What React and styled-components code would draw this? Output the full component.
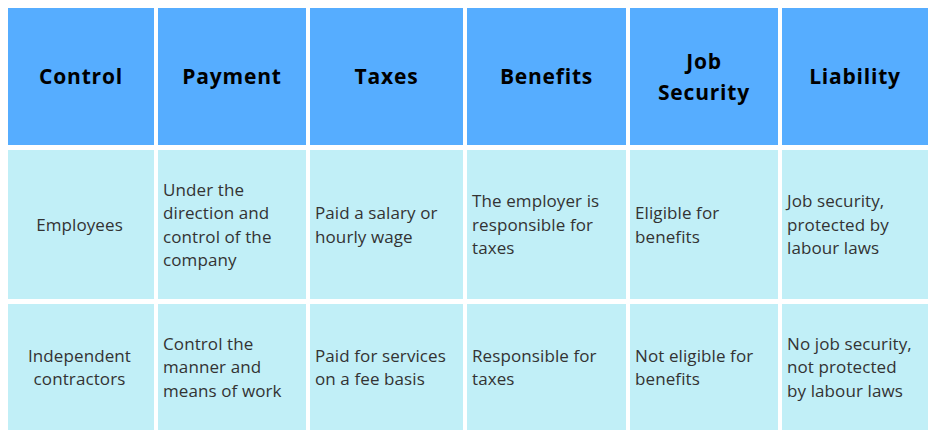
import styled, { createGlobalStyle } from "styled-components";

const GlobalStyle = createGlobalStyle`
  html, body {
    margin: 0;
    padding: 0;
    background: #ffffff;
  }
  body {
    font-family: "Open Sans", "Liberation Sans", sans-serif;
  }
`;

const headers = ["Control", "Payment", "Taxes", "Benefits", "Job Security", "Liability"];

const rows = [
  [
    "Employees",
    "Under the direction and control of the company",
    "Paid a salary or hourly wage",
    "The employer is responsible for taxes",
    "Eligible for benefits",
    "Job security, protected by labour laws",
  ],
  [
    "Independent contractors",
    "Control the manner and means of work",
    "Paid for services on a fee basis",
    "Responsible for taxes",
    "Not eligible for benefits",
    "No job security, not protected by labour laws",
  ],
];

export default function App() {
  return (
    <>
      <GlobalStyle />
      <Page>
        <Table>
          {headers.map((h) => (
            <HeadCell key={h}>
              <span>{h === "Job Security" ? <>Job<br />Security</> : h}</span>
            </HeadCell>
          ))}
          {rows.map((row, r) =>
            row.map((text, c) => (
              <BodyCell key={`${r}-${c}`} $first={c === 0}>
                <span>{text}</span>
              </BodyCell>
            ))
          )}
        </Table>
      </Page>
    </>
  );
}

const Page = styled.div`
  padding: 8px;
  width: 920px;
`;

const Table = styled.div`
  display: grid;
  grid-template-columns: 146px 148px 153px 159px 148px 146px;
  grid-template-rows: 137px 149px 126px;
  column-gap: 4px;
  row-gap: 5px;
`;

const HeadCell = styled.div`
  background: #56adff;
  display: flex;
  align-items: center;
  justify-content: center;
  text-align: center;
  font-family: "Open Sans", sans-serif;
  font-weight: 700;
  font-size: 21px;
  line-height: 31px;
  letter-spacing: 0.8px;
  color: #000;
`;

const BodyCell = styled.div`
  background: #c1eff7;
  display: flex;
  align-items: center;
  justify-content: ${(p) => (p.$first ? "center" : "flex-start")};
  text-align: ${(p) => (p.$first ? "center" : "left")};
  padding: 0 8px 0 5px;
  font-size: 17px;
  font-weight: 400;
  line-height: 23.5px;
  color: #333;
  letter-spacing: 0.1px;
`;
